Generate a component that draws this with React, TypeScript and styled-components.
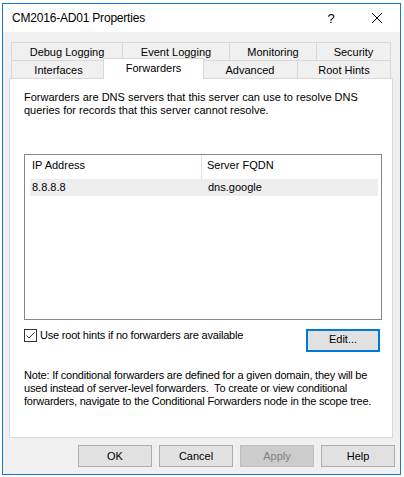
import React from 'react';
import styled, { createGlobalStyle } from 'styled-components';

const GlobalStyle = createGlobalStyle`
  html, body { margin: 0; padding: 0; background: #ffffff; }
  body { font-family: "Liberation Sans", Arial, sans-serif; color: #000; }
  * { box-sizing: border-box; }
`;

const Desktop = styled.div`
  width: 404px;
  height: 477px;
  padding: 3px 0 0 2px;
  background: #ffffff;
  overflow: hidden;
`;

const Window = styled.div`
  width: 399px;
  height: 472px;
  border: 1px solid #1979d2;
  background: #f0f0f0;
  display: flex;
  flex-direction: column;
`;

const TitleBar = styled.div`
  height: 28px;
  background: #ffffff;
  display: flex;
  align-items: center;
  padding-left: 9px;
`;

const Title = styled.div`
  flex: 1;
  font-size: 12px;
  letter-spacing: -0.2px;
  line-height: 14px;
`;

const CaptionButton = styled.div`
  width: 46px;
  height: 28px;
  display: flex;
  align-items: center;
  justify-content: center;
  font-size: 13px;
`;

const Body = styled.div`
  flex: 1;
  display: flex;
  flex-direction: column;
  padding: 10px 7px 7px 6px;
  min-height: 0;
`;

const TabStrip = styled.div`
  margin: 0 2px;
  display: flex;
  flex-direction: column;
`;

const TabRow = styled.div`
  display: flex;
  align-items: flex-start;
  height: 18px;
`;

const Tab = styled.div<{ $w: number; $last?: boolean; $selected?: boolean }>`
  flex: none;
  width: ${(p) => p.$w}px;
  height: 18px;
  border-top: 1px solid #d9d9d9;
  border-left: 1px solid #d9d9d9;
  border-right: ${(p) => (p.$last ? '1px solid #d9d9d9' : 'none')};
  background: #f0f0f0;
  font-size: 11px;
  line-height: 13px;
  padding-top: 3px;
  text-align: center;
  white-space: nowrap;
  ${(p) =>
    p.$selected &&
    `
    position: relative;
    z-index: 2;
    width: ${p.$w + 4}px;
    height: 21px;
    margin: -2px -2px 0 -2px;
    border-right: 1px solid #d9d9d9;
    background: #ffffff;
  `}
`;

const Panel = styled.div`
  flex: 1;
  border: 1px solid #d9d9d9;
  background: #ffffff;
  padding: 12px 10px 0 14px;
  display: flex;
  flex-direction: column;
  position: relative;
  z-index: 1;
`;

const Text = styled.p<{ $mt?: number; $tight?: boolean }>`
  margin: ${(p) => p.$mt ?? 0}px 0 0 0;
  font-size: 11px;
  line-height: 13px;
  white-space: pre;
  letter-spacing: ${(p) => (p.$tight ? '-0.2px' : 'normal')};
`;

const ListView = styled.div`
  margin-top: 37px;
  height: 166px;
  border: 1px solid #828790;
  background: #ffffff;
  display: flex;
  flex-direction: column;
`;

const HeaderRow = styled.div`
  display: grid;
  grid-template-columns: 177px 1fr;
  height: 24px;
`;

const HeaderCell = styled.div<{ $divider?: boolean; $pad: number }>`
  font-size: 11px;
  line-height: 13px;
  padding: 4px 0 0 ${(p) => p.$pad}px;
  border-right: ${(p) => (p.$divider ? '1px solid #e5e5e5' : 'none')};
`;

const ItemRow = styled.div`
  margin-left: 5px;
  width: 348px;
  height: 17px;
  background: #eeeeee;
  display: grid;
  grid-template-columns: 172px 1fr;
`;

const ItemCell = styled.div<{ $pad: number }>`
  font-size: 11px;
  line-height: 17px;
  padding-left: ${(p) => p.$pad}px;
`;

const OptionRow = styled.div`
  margin-top: 9px;
  display: flex;
  align-items: flex-start;
`;

const CheckBox = styled.div`
  width: 13px;
  height: 13px;
  border: 1px solid #333333;
  background: #ffffff;
  display: flex;
  align-items: center;
  justify-content: center;
`;

const CheckLabel = styled.span`
  margin-left: 3px;
  font-size: 11px;
  line-height: 13px;
  letter-spacing: -0.2px;
`;

const Button = styled.div<{ $default?: boolean; $disabled?: boolean }>`
  flex: none;
  width: 74px;
  height: ${(p) => (p.$default ? 23 : 22)}px;
  border: ${(p) =>
    p.$default ? '2px solid #0078d7' : p.$disabled ? '1px solid #bfbfbf' : '1px solid #adadad'};
  background: ${(p) => (p.$disabled ? '#cccccc' : '#e1e1e1')};
  color: ${(p) => (p.$disabled ? '#838383' : '#000000')};
  font-size: 11px;
  line-height: 13px;
  display: flex;
  align-items: center;
  justify-content: center;
  padding-bottom: ${(p) => (p.$default ? 3 : 0)}px;
`;

const EditButton = styled(Button)`
  margin-left: auto;
  margin-right: 2px;
`;

const Footer = styled.div`
  margin-top: 7px;
  margin-right: -2px;
  display: flex;
  justify-content: flex-end;
  gap: 7px;
`;

const backTabs = [
  { label: 'Debug Logging', w: 111 },
  { label: 'Event Logging', w: 107 },
  { label: 'Monitoring', w: 87 },
  { label: 'Security', w: 75 },
];

const frontTabs = [
  { label: 'Interfaces', w: 94 },
  { label: 'Forwarders', w: 97, selected: true },
  { label: 'Advanced', w: 95 },
  { label: 'Root Hints', w: 94 },
];

export default function App() {
  return (
    <>
      <GlobalStyle />
      <Desktop>
        <Window>
          <TitleBar>
            <Title>CM2016-AD01 Properties</Title>
            <CaptionButton>?</CaptionButton>
            <CaptionButton>
              <svg width="10" height="10" viewBox="0 0 10 10">
                <path d="M0 0 L10 10 M10 0 L0 10" stroke="#000" strokeWidth="1" fill="none" />
              </svg>
            </CaptionButton>
          </TitleBar>
          <Body>
            <TabStrip>
              <TabRow>
                {backTabs.map((t, i) => (
                  <Tab key={t.label} $w={t.w} $last={i === backTabs.length - 1}>
                    {t.label}
                  </Tab>
                ))}
              </TabRow>
              <TabRow>
                {frontTabs.map((t, i) => (
                  <Tab
                    key={t.label}
                    $w={t.w}
                    $last={i === frontTabs.length - 1}
                    $selected={t.selected}
                  >
                    {t.label}
                  </Tab>
                ))}
              </TabRow>
            </TabStrip>
            <Panel>
              <Text>
                {'Forwarders are DNS servers that this server can use to resolve DNS\nqueries for records that this server cannot resolve.'}
              </Text>
              <ListView>
                <HeaderRow>
                  <HeaderCell $divider $pad={7}>IP Address</HeaderCell>
                  <HeaderCell $pad={5}>Server FQDN</HeaderCell>
                </HeaderRow>
                <ItemRow>
                  <ItemCell $pad={2}>8.8.8.8</ItemCell>
                  <ItemCell $pad={6}>dns.google</ItemCell>
                </ItemRow>
              </ListView>
              <OptionRow>
                <CheckBox>
                  <svg width="11" height="11" viewBox="0 0 11 11">
                    <path d="M1.5 5.5 L4 8 L9.5 2.5" stroke="#333" strokeWidth="1" fill="none" />
                  </svg>
                </CheckBox>
                <CheckLabel>Use root hints if no forwarders are available</CheckLabel>
                <EditButton $default>Edit...</EditButton>
              </OptionRow>
              <Text $mt={17} $tight>
                {'Note: If conditional forwarders are defined for a given domain, they will be\nused instead of server-level forwarders.  To create or view conditional\nforwarders, navigate to the Conditional Forwarders node in the scope tree.'}
              </Text>
            </Panel>
            <Footer>
              <Button>OK</Button>
              <Button>Cancel</Button>
              <Button $disabled>Apply</Button>
              <Button>Help</Button>
            </Footer>
          </Body>
        </Window>
      </Desktop>
    </>
  );
}
